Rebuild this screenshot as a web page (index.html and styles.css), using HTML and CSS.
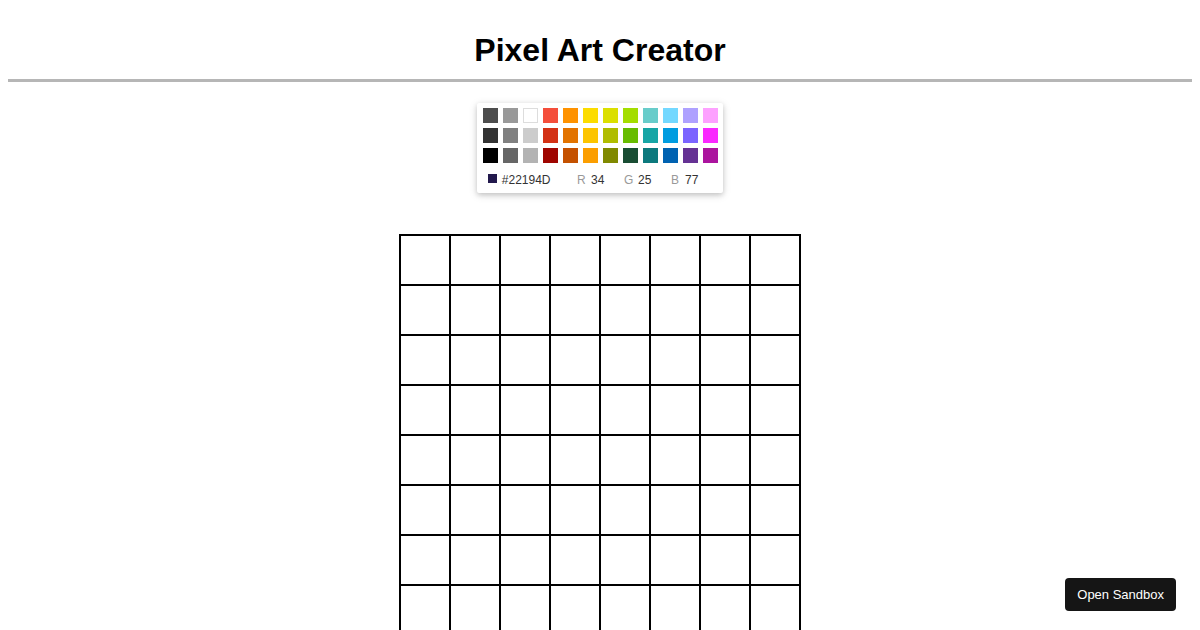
FILE: index.html
```html
<!DOCTYPE html>
<html lang="en">
<head>
    <meta charset="UTF-8">
    <title>Pixel Art Creator</title>
    <link rel="stylesheet" href="styles.css">
</head>
<body>
<div class="header">
    <h1 class="title">Pixel Art Creator</h1>
    <div class="rule"></div>
</div>

<div class="picker_wrap">
    <div class="compact">
        <div class="swatches">
            <span class="swatch" style="background:#4D4D4D"></span>
            <span class="swatch" style="background:#999999"></span>
            <span class="swatch swatch_white" style="background:#FFFFFF"></span>
            <span class="swatch" style="background:#F44E3B"></span>
            <span class="swatch" style="background:#FE9200"></span>
            <span class="swatch" style="background:#FCDC00"></span>
            <span class="swatch" style="background:#DBDF00"></span>
            <span class="swatch" style="background:#A4DD00"></span>
            <span class="swatch" style="background:#68CCCA"></span>
            <span class="swatch" style="background:#73D8FF"></span>
            <span class="swatch" style="background:#AEA1FF"></span>
            <span class="swatch" style="background:#FDA1FF"></span>

            <span class="swatch" style="background:#333333"></span>
            <span class="swatch" style="background:#808080"></span>
            <span class="swatch" style="background:#CCCCCC"></span>
            <span class="swatch" style="background:#D33115"></span>
            <span class="swatch" style="background:#E27300"></span>
            <span class="swatch" style="background:#FCC400"></span>
            <span class="swatch" style="background:#B0BC00"></span>
            <span class="swatch" style="background:#68BC00"></span>
            <span class="swatch" style="background:#16A5A5"></span>
            <span class="swatch" style="background:#009CE0"></span>
            <span class="swatch" style="background:#7B64FF"></span>
            <span class="swatch" style="background:#FA28FF"></span>

            <span class="swatch" style="background:#000000"></span>
            <span class="swatch" style="background:#666666"></span>
            <span class="swatch" style="background:#B3B3B3"></span>
            <span class="swatch" style="background:#9F0500"></span>
            <span class="swatch" style="background:#C45100"></span>
            <span class="swatch" style="background:#FB9E00"></span>
            <span class="swatch" style="background:#808900"></span>
            <span class="swatch" style="background:#194D33"></span>
            <span class="swatch" style="background:#0C797D"></span>
            <span class="swatch" style="background:#0062B1"></span>
            <span class="swatch" style="background:#653294"></span>
            <span class="swatch" style="background:#AB149E"></span>
        </div>

        <div class="fields">
            <div class="hex_wrap">
                <span class="active" style="background:#22194D"></span>
                <span class="hex_value">#22194D</span>
            </div>
            <div class="rgb_wrap">
                <span class="rgb_label">R</span>
                <span class="rgb_value">34</span>
            </div>
            <div class="rgb_wrap">
                <span class="rgb_label">G</span>
                <span class="rgb_value">25</span>
            </div>
            <div class="rgb_wrap">
                <span class="rgb_label">B</span>
                <span class="rgb_value">77</span>
            </div>
        </div>
    </div>
</div>

<div class="canvas">
    <div class="cell"></div><div class="cell"></div><div class="cell"></div><div class="cell"></div><div class="cell"></div><div class="cell"></div><div class="cell"></div><div class="cell"></div>
    <div class="cell"></div><div class="cell"></div><div class="cell"></div><div class="cell"></div><div class="cell"></div><div class="cell"></div><div class="cell"></div><div class="cell"></div>
    <div class="cell"></div><div class="cell"></div><div class="cell"></div><div class="cell"></div><div class="cell"></div><div class="cell"></div><div class="cell"></div><div class="cell"></div>
    <div class="cell"></div><div class="cell"></div><div class="cell"></div><div class="cell"></div><div class="cell"></div><div class="cell"></div><div class="cell"></div><div class="cell"></div>
    <div class="cell"></div><div class="cell"></div><div class="cell"></div><div class="cell"></div><div class="cell"></div><div class="cell"></div><div class="cell"></div><div class="cell"></div>
    <div class="cell"></div><div class="cell"></div><div class="cell"></div><div class="cell"></div><div class="cell"></div><div class="cell"></div><div class="cell"></div><div class="cell"></div>
    <div class="cell"></div><div class="cell"></div><div class="cell"></div><div class="cell"></div><div class="cell"></div><div class="cell"></div><div class="cell"></div><div class="cell"></div>
    <div class="cell"></div><div class="cell"></div><div class="cell"></div><div class="cell"></div><div class="cell"></div><div class="cell"></div><div class="cell"></div><div class="cell"></div>
</div>

<a class="sandbox_btn" href="#">Open Sandbox</a>
</body>
</html>
```

FILE: styles.css
```css
body{
    margin: 8px;
    font-family: "Liberation Sans", Arial, sans-serif;
    color: #000;
    background: #fff;
}

.title{
    margin: 0;
    padding-top: 24px;
    font-size: 32px;
    line-height: 37px;
    font-weight: bold;
    text-align: center;
}
.rule{
    margin-top: 10px;
    height: 3px;
    background-color: #b6b6b6;
}

.picker_wrap{
    display: flex;
    justify-content: center;
    margin-top: 21px;
}
.compact{
    width: 240px;
    padding: 5px 0 0 6px;
    background: #fff;
    border-radius: 2px;
    box-shadow: 0 2px 10px rgba(0,0,0,.12), 0 2px 5px rgba(0,0,0,.16);
}
.swatches{
    display: flex;
    flex-wrap: wrap;
}
.swatch{
    width: 15px;
    height: 15px;
    margin: 0 5px 5px 0;
}
.swatch_white{
    box-shadow: inset 0 0 0 1px #ddd;
}

.fields{
    display: flex;
    height: 19px;
    padding: 0 5px 6px 0;
    font-size: 12px;
    line-height: 16px;
}
.hex_wrap{
    flex: 6;
    position: relative;
}
.active{
    position: absolute;
    top: 6px;
    left: 5px;
    width: 9px;
    height: 9px;
}
.hex_value{
    display: block;
    padding: 4px 0 0 20%;
    color: #333;
}
.rgb_wrap{
    flex: 3;
    position: relative;
}
.rgb_label{
    position: absolute;
    top: 4px;
    left: 0;
    color: #999;
}
.rgb_value{
    display: block;
    padding: 4px 0 0 30%;
    color: #333;
}

.canvas{
    display: grid;
    grid-template-columns: repeat(8, 50px);
    grid-auto-rows: 50px;
    width: max-content;
    margin: 41px auto 0;
    border: 1px solid #000;
}
.cell{
    box-sizing: border-box;
    border: 1px solid #000;
    background: #fff;
}

.sandbox_btn{
    position: fixed;
    right: 24px;
    bottom: 19px;
    height: 33px;
    padding: 0 12px;
    display: flex;
    align-items: center;
    background-color: #151515;
    color: #fff;
    font-size: 13px;
    text-decoration: none;
    border-radius: 4px;
}
```
